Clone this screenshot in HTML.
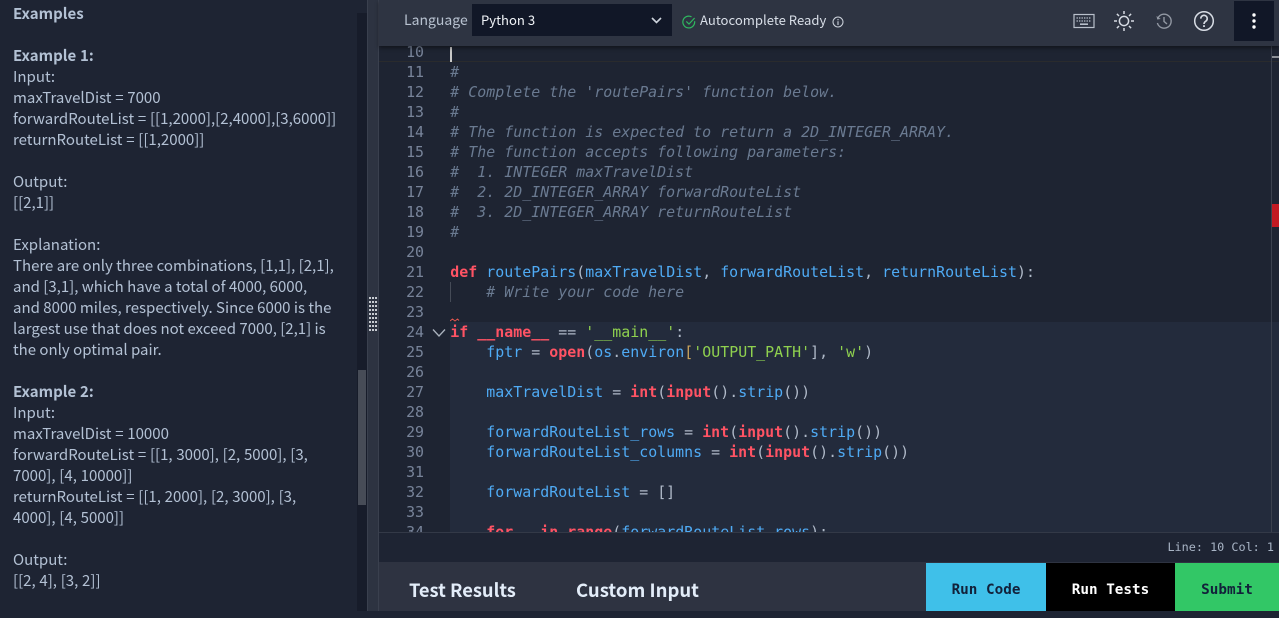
<!DOCTYPE html>
<html><head><meta charset="utf-8">
<style>
html,body{margin:0;padding:0;background:#1e2433;}
body{width:1279px;height:611px;position:relative;overflow:hidden;font-family:"Liberation Sans",sans-serif;}
.a{position:absolute;}
.t{position:absolute;left:13px;white-space:pre;font-size:15px;line-height:21px;color:#b3c1d4;word-spacing:.4px;font-family:"Noto Sans CJK JP","Liberation Sans",sans-serif;}
.b{font-weight:700;}
.ln{position:absolute;left:380px;width:44px;text-align:right;font:14.9px/20px "DejaVu Sans Mono",monospace;color:#78849a;}
.c{position:absolute;left:450.3px;white-space:pre;font:14.9px/20px "DejaVu Sans Mono",monospace;letter-spacing:.03px;color:#b0bac9;}
.cm{color:#6a7a91;font-style:italic;}
.k{color:#ff5364;font-weight:700;}
.f{color:#4fabf5;}
.s{color:#8fd14f;}
.y{color:#c9a45c;}
</style></head><body>
<!-- left panel -->
<div class="a" style="left:357px;top:13px;width:10px;height:598px;background:#171c2a"></div>
<div class="a" style="left:358px;top:370px;width:8px;height:135px;background:#474c57"></div>
<div class="t b" style="top:3px">Examples</div>
<div class="t b" style="top:45px">Example 1:</div>
<div class="t" style="top:66px">Input:</div>
<div class="t" style="top:87px">maxTravelDist = 7000</div>
<div class="t" style="top:108px">forwardRouteList = [[1,2000],[2,4000],[3,6000]]</div>
<div class="t" style="top:129px">returnRouteList = [[1,2000]]</div>
<div class="t" style="top:171px">Output:</div>
<div class="t" style="top:192px">[[2,1]]</div>
<div class="t" style="top:234px">Explanation:</div>
<div class="t" style="top:255px;word-spacing:0">There are only three combinations, [1,1], [2,1],</div>
<div class="t" style="top:276px;word-spacing:0">and [3,1], which have a total of 4000, 6000,</div>
<div class="t" style="top:297px;word-spacing:0">and 8000 miles, respectively. Since 6000 is the</div>
<div class="t" style="top:318px;word-spacing:0">largest use that does not exceed 7000, [2,1] is</div>
<div class="t" style="top:339px;word-spacing:0">the only optimal pair.</div>
<div class="t b" style="top:381px">Example 2:</div>
<div class="t" style="top:402px">Input:</div>
<div class="t" style="top:423px">maxTravelDist = 10000</div>
<div class="t" style="top:444px">forwardRouteList = [[1, 3000], [2, 5000], [3,</div>
<div class="t" style="top:465px">7000], [4, 10000]]</div>
<div class="t" style="top:486px">returnRouteList = [[1, 2000], [2, 3000], [3,</div>
<div class="t" style="top:507px">4000], [4, 5000]]</div>
<div class="t" style="top:549px">Output:</div>
<div class="t" style="top:570px">[[2, 4], [3, 2]]</div>
<!-- divider -->
<div class="a" style="left:367px;top:0;width:12px;height:611px;background:#2d3341;border-left:1px solid #3a404e;border-right:1px solid #3a404e;box-sizing:border-box"></div>
<svg class="a" style="left:369px;top:296px" width="9" height="38"><g fill="#c8ccd2">
<rect x="0" y="1" width="2" height="2"/><rect x="3" y="1" width="2" height="2"/><rect x="6" y="1" width="2" height="2"/>
<rect x="0" y="5" width="2" height="2"/><rect x="3" y="5" width="2" height="2"/><rect x="6" y="5" width="2" height="2"/>
<rect x="0" y="9" width="2" height="2"/><rect x="3" y="9" width="2" height="2"/><rect x="6" y="9" width="2" height="2"/>
<rect x="0" y="13" width="2" height="2"/><rect x="3" y="13" width="2" height="2"/><rect x="6" y="13" width="2" height="2"/>
<rect x="0" y="17" width="2" height="2"/><rect x="3" y="17" width="2" height="2"/><rect x="6" y="17" width="2" height="2"/>
<rect x="0" y="21" width="2" height="2"/><rect x="3" y="21" width="2" height="2"/><rect x="6" y="21" width="2" height="2"/>
<rect x="0" y="25" width="2" height="2"/><rect x="3" y="25" width="2" height="2"/><rect x="6" y="25" width="2" height="2"/>
<rect x="0" y="29" width="2" height="2"/><rect x="3" y="29" width="2" height="2"/><rect x="6" y="29" width="2" height="2"/>
<rect x="0" y="33" width="2" height="2"/><rect x="3" y="33" width="2" height="2"/><rect x="6" y="33" width="2" height="2"/>
</g></svg>
<!-- editor -->
<div class="a" style="left:379px;top:46px;width:900px;height:487px;background:#1e2432;overflow:hidden">
  <div class="a" style="left:71px;top:276px;width:829px;height:211px;background:#232b3c"></div>
  <div class="a" style="left:0;top:15px;width:900px;height:1px;background:#2a2b2d"></div>
  <div class="a" style="left:892px;top:0;width:1px;height:487px;background:#3b414e"></div>
  <div class="a" style="left:893px;top:158px;width:7px;height:23px;background:#c21a22"></div>
  <div class="a" style="left:893px;top:10px;width:7px;height:2px;background:#8d9097"></div>
</div>
<div class="a" style="left:450px;top:282px;width:1px;height:20px;background:#454b57"></div>
<div class="a" style="left:450px;top:47px;width:2px;height:15px;background:#c9c9c9"></div>
<svg class="a" style="left:450px;top:318px" width="10" height="4"><path d="M0 3 L2.5 1 L5 3 L7.5 1 L9 2.5" fill="none" stroke="#e2564f" stroke-width="1"/></svg>
<svg class="a" style="left:432px;top:328px" width="14" height="10"><path d="M1 1.5 L7 8 L13 1.5" fill="none" stroke="#aab2bd" stroke-width="1.3"/></svg>
<div class="a" style="left:379px;top:0;width:900px;height:533px;overflow:hidden;pointer-events:none">
<div style="position:absolute;left:-379px;top:0;width:1279px;height:533px">
<div class="ln" style="top:42px">10</div>
<div class="ln" style="top:62px">11</div><div class="c cm" style="top:62px">#</div>
<div class="ln" style="top:82px">12</div><div class="c cm" style="top:82px"># Complete the 'routePairs' function below.</div>
<div class="ln" style="top:102px">13</div><div class="c cm" style="top:102px">#</div>
<div class="ln" style="top:122px">14</div><div class="c cm" style="top:122px"># The function is expected to return a 2D_INTEGER_ARRAY.</div>
<div class="ln" style="top:142px">15</div><div class="c cm" style="top:142px"># The function accepts following parameters:</div>
<div class="ln" style="top:162px">16</div><div class="c cm" style="top:162px">#  1. INTEGER maxTravelDist</div>
<div class="ln" style="top:182px">17</div><div class="c cm" style="top:182px">#  2. 2D_INTEGER_ARRAY forwardRouteList</div>
<div class="ln" style="top:202px">18</div><div class="c cm" style="top:202px">#  3. 2D_INTEGER_ARRAY returnRouteList</div>
<div class="ln" style="top:222px">19</div><div class="c cm" style="top:222px">#</div>
<div class="ln" style="top:242px">20</div>
<div class="ln" style="top:262px">21</div><div class="c" style="top:262px"><span class="k">def</span> <span class="f">routePairs</span>(<span class="f">maxTravelDist</span>, <span class="f">forwardRouteList</span>, <span class="f">returnRouteList</span>):</div>
<div class="ln" style="top:282px">22</div><div class="c cm" style="top:282px">    # Write your code here</div>
<div class="ln" style="top:302px">23</div>
<div class="ln" style="top:322px">24</div><div class="c" style="top:322px"><span class="k">if</span> <span class="k">__name__</span> == <span class="s">'__main__'</span>:</div>
<div class="ln" style="top:342px">25</div><div class="c" style="top:342px">    <span class="f">fptr</span> = <span class="k">open</span>(<span class="f">os</span>.<span class="f">environ</span><span class="y">[</span><span class="s">'OUTPUT_PATH'</span>], <span class="s">'w'</span>)</div>
<div class="ln" style="top:362px">26</div>
<div class="ln" style="top:382px">27</div><div class="c" style="top:382px">    <span class="f">maxTravelDist</span> = <span class="k">int</span>(<span class="k">input</span>().<span class="f">strip</span>())</div>
<div class="ln" style="top:402px">28</div>
<div class="ln" style="top:422px">29</div><div class="c" style="top:422px">    <span class="f">forwardRouteList_rows</span> = <span class="k">int</span>(<span class="k">input</span>().<span class="f">strip</span>())</div>
<div class="ln" style="top:442px">30</div><div class="c" style="top:442px">    <span class="f">forwardRouteList_columns</span> = <span class="k">int</span>(<span class="k">input</span>().<span class="f">strip</span>())</div>
<div class="ln" style="top:462px">31</div>
<div class="ln" style="top:482px">32</div><div class="c" style="top:482px">    <span class="f">forwardRouteList</span> = []</div>
<div class="ln" style="top:502px">33</div>
<div class="ln" style="top:522px">34</div><div class="c" style="top:522px">    <span class="k">for</span> _ <span class="k">in</span> <span class="k">range</span>(<span class="f">forwardRouteList_rows</span>):</div>
</div></div>
<!-- top bar -->
<div class="a" style="left:379px;top:0;width:900px;height:46px;background:#2e3442;box-shadow:0 2px 4px rgba(0,0,0,.45)"></div>
<div class="a" style="left:404px;top:9px;font:14px/22px 'Noto Sans CJK JP','Liberation Sans',sans-serif;color:#b8c2d0;white-space:pre">Language</div>
<div class="a" style="left:472px;top:4px;width:200px;height:32px;background:#111727"></div>
<div class="a" style="left:481px;top:9px;font:13.1px/22px 'Noto Sans CJK JP','Liberation Sans',sans-serif;color:#f0f3f7;white-space:pre">Python 3</div>
<svg class="a" style="left:650px;top:16px" width="13" height="9"><path d="M2 2 L6.5 6.5 L11 2" fill="none" stroke="#cdd3dc" stroke-width="1.6"/></svg>
<svg class="a" style="left:682px;top:15px" width="14" height="14" viewBox="0 0 14 14"><path d="M12.6 6.2 A5.9 5.9 0 1 1 9.5 1.8" fill="none" stroke="#2fb85f" stroke-width="1.2"/><path d="M4.3 6.4 L7 9 L12.6 3" fill="none" stroke="#2fb85f" stroke-width="1.2"/></svg>
<div class="a" style="left:700px;top:9px;font:13.1px/22px 'Noto Sans CJK JP','Liberation Sans',sans-serif;color:#d8dee7;white-space:pre">Autocomplete Ready</div>
<svg class="a" style="left:832px;top:16px" width="12" height="12" viewBox="0 0 12 12"><circle cx="6" cy="6" r="5" fill="none" stroke="#cfd5de" stroke-width="1"/><path d="M6 5.2 V9 M6 3 V4.2" stroke="#cfd5de" stroke-width="1.1"/></svg>
<svg class="a" style="left:1073px;top:13px" width="22" height="16" viewBox="0 0 22 16"><rect x="1" y="1.5" width="20" height="13" fill="none" stroke="#b9c0cb" stroke-width="1.2"/><path d="M3.5 5 H18.5 M3.5 8 H18.5" stroke="#b9c0cb" stroke-width="1.2" stroke-dasharray="1.4 1.1"/><path d="M7 11.2 H15" stroke="#b9c0cb" stroke-width="1.6"/></svg>
<svg class="a" style="left:1113px;top:10px" width="22" height="22" viewBox="0 0 22 22"><circle cx="11" cy="11" r="4.6" fill="none" stroke="#d5dae2" stroke-width="1.5"/><path d="M11 1 V4 M11 18 V21 M1 11 H4 M18 11 H21 M3.9 3.9 L6 6 M16 16 L18.1 18.1 M3.9 18.1 L6 16 M16 6 L18.1 3.9" stroke="#d5dae2" stroke-width="1.5"/></svg>
<svg class="a" style="left:1155px;top:12px" width="18" height="18" viewBox="0 0 18 18"><path d="M3.2 5.5 A7 7 0 1 1 2.4 11" fill="none" stroke="#9298a3" stroke-width="1.4"/><path d="M1.5 4 L2.2 7.5 L5.8 7" fill="#9298a3"/><path d="M9 5 V9.4 L12 12" fill="none" stroke="#9298a3" stroke-width="1.4"/></svg>
<svg class="a" style="left:1193px;top:10px" width="22" height="22" viewBox="0 0 22 22"><circle cx="11" cy="11" r="9.3" fill="none" stroke="#d8dde5" stroke-width="1.5"/><path d="M7.8 8.6 A3.2 3.2 0 1 1 12.8 11.2 C11.4 12.1 11 12.6 11 14" fill="none" stroke="#d8dde5" stroke-width="1.6"/><rect x="10.1" y="15.2" width="1.8" height="1.8" fill="#d8dde5"/></svg>
<div class="a" style="left:1234px;top:1px;width:40px;height:40px;background:#111727"></div>
<svg class="a" style="left:1251px;top:13px" width="6" height="16"><circle cx="3" cy="2" r="1.7" fill="#fff"/><circle cx="3" cy="8" r="1.7" fill="#fff"/><circle cx="3" cy="14" r="1.7" fill="#fff"/></svg>
<!-- status bar -->
<div class="a" style="left:379px;top:532px;width:900px;height:30px;background:#1e2433;border-top:1px solid #333947;box-sizing:border-box"></div>
<div class="a" style="right:5px;top:538px;font:11.8px/18px 'DejaVu Sans Mono',monospace;color:#a9b5c6;white-space:pre">Line: 10 Col: 1</div>
<!-- bottom bar -->
<div class="a" style="left:379px;top:562px;width:900px;height:49px;background:#2e3341"></div>
<div class="a" style="left:409px;top:576px;font:700 18.3px/28px 'Noto Sans CJK JP','Liberation Sans',sans-serif;color:#e3edf9;white-space:pre">Test Results</div>
<div class="a" style="left:576px;top:576px;font:700 18.5px/28px 'Noto Sans CJK JP','Liberation Sans',sans-serif;color:#e3edf9;white-space:pre">Custom Input</div>
<div class="a" style="left:926px;top:563px;width:120px;height:48px;background:#3fc0e9;color:#12213a;font:700 14.3px/55px 'DejaVu Sans Mono',monospace;text-align:center;white-space:pre">Run Code</div>
<div class="a" style="left:1046px;top:563px;width:129px;height:48px;background:#000;color:#fff;font:700 14.3px/55px 'DejaVu Sans Mono',monospace;text-align:center;white-space:pre">Run Tests</div>
<div class="a" style="left:1175px;top:563px;width:104px;height:48px;background:#32c766;color:#12213a;font:700 14.3px/55px 'DejaVu Sans Mono',monospace;text-align:center;white-space:pre">Submit</div>
</body></html>
